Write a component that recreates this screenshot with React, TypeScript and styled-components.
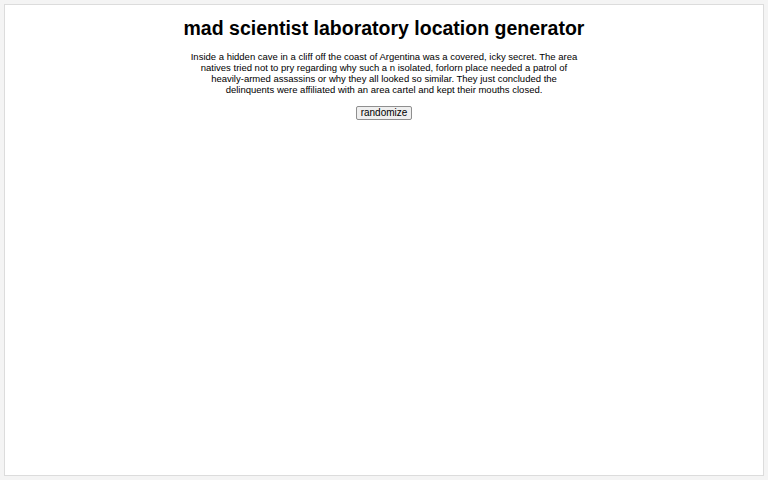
import React from "react";
import styled, { createGlobalStyle } from "styled-components";

const Global = createGlobalStyle`
  html, body { margin: 0; padding: 0; background: #f4f4f4; }
  body { font-family: "Liberation Sans", Arial, sans-serif; }
`;

const Page = styled.div`
  box-sizing: border-box;
  height: 480px;
  padding: 4px;
  display: flex;
`;

const Card = styled.main`
  flex: 1;
  background: #ffffff;
  border: 1px solid #dcdcdc;
  display: flex;
  flex-direction: column;
  align-items: center;
`;

const Title = styled.h1`
  margin: 12px 0 0;
  font-size: 19.5px;
  line-height: 22px;
  font-weight: bold;
  color: #000;
`;

const Text = styled.p`
  margin: 12px 0 0;
  width: 392px;
  font-size: 9.5px;
  line-height: 11px;
  text-align: center;
  color: #000;
`;

const Button = styled.button`
  margin-top: 11px;
  font-family: "Liberation Sans", Arial, sans-serif;
  font-size: 10px;
  line-height: 12px;
  padding: 0 4px;
  color: #000;
  background: #efefef;
  border: 1px solid #8f8f8f;
  border-radius: 2px;
`;

export default function App() {
  return (
    <>
      <Global />
      <Page>
        <Card>
          <Title>mad scientist laboratory location generator</Title>
          <Text>
            Inside a hidden cave in a cliff off the coast of Argentina was a covered, icky secret. The area natives tried not to pry regarding why such a n isolated, forlorn place needed a patrol of heavily-armed assassins or why they all looked so similar. They just concluded the delinquents were affiliated with an area cartel and kept their mouths closed.
          </Text>
          <Button>randomize</Button>
        </Card>
      </Page>
    </>
  );
}
